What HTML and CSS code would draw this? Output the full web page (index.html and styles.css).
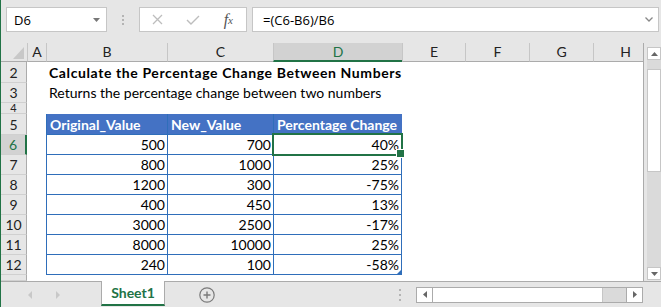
FILE: index.html
```html
<!DOCTYPE html>
<html lang="en">
<head>
    <meta charset="UTF-8">
    <title>Percentage Change</title>

    <link rel="stylesheet" href="styles.css">

</head>
<body>
    <!-- name box + formula -->
    <div class="formula_bar">
        <div class="name_box">
            <span>D6</span>
            <svg width="7" height="4" viewBox="0 0 7 4"><path d="M0 0h7L3.5 4z" fill="#777"/></svg>
        </div>
        <div class="grip"><i></i><i></i><i></i></div>
        <div class="fx_box">
            <span><svg width="11" height="11" viewBox="0 0 11 11"><path d="M1 1l9 9M10 1l-9 9" stroke="#bdbdbd" stroke-width="1.3" fill="none"/></svg></span>
            <span><svg width="14" height="10" viewBox="0 0 14 10"><path d="M1 5l4 4L13 1" stroke="#bdbdbd" stroke-width="1.4" fill="none"/></svg></span>
            <span class="fx">f<sub>x</sub></span>
        </div>
        <div class="formula">
            <span>=(C6-B6)/B6</span>
            <svg width="8" height="5" viewBox="0 0 8 5"><path d="M0.5 0.5l3.5 3.5 3.5-3.5" stroke="#888" stroke-width="1.3" fill="none"/></svg>
        </div>
    </div>

    <div class="main">
        <div class="sheet">
            <div class="corner"><svg width="11" height="12" viewBox="0 0 11 12"><path d="M11 0v12H0z" fill="#c8c8c8"/></svg></div>
            <div class="ch">A</div>
            <div class="ch">B</div>
            <div class="ch">C</div>
            <div class="ch on">D</div>
            <div class="ch">E</div>
            <div class="ch">F</div>
            <div class="ch">G</div>
            <div class="ch">H</div>

            <div class="rh">2</div>
            <div class="cell col_b title">Calculate the Percentage Change Between Numbers</div>

            <div class="rh">3</div>
            <div class="cell col_b sub">Returns the percentage change between two numbers</div>

            <div class="rh short">4</div>

            <div class="rh">5</div>
            <div class="th col_b">Original_Value</div>
            <div class="th">New_Value</div>
            <div class="th">Percentage Change</div>

            <div class="rh on">6</div>
            <div class="td col_b">500</div>
            <div class="td">700</div>
            <div class="td last sel">40%</div>

            <div class="rh">7</div>
            <div class="td col_b">800</div>
            <div class="td">1000</div>
            <div class="td last">25%</div>

            <div class="rh">8</div>
            <div class="td col_b">1200</div>
            <div class="td">300</div>
            <div class="td last">-75%</div>

            <div class="rh">9</div>
            <div class="td col_b">400</div>
            <div class="td">450</div>
            <div class="td last">13%</div>

            <div class="rh">10</div>
            <div class="td col_b">3000</div>
            <div class="td">2500</div>
            <div class="td last">-17%</div>

            <div class="rh">11</div>
            <div class="td col_b">8000</div>
            <div class="td">10000</div>
            <div class="td last">25%</div>

            <div class="rh">12</div>
            <div class="td col_b">240</div>
            <div class="td">100</div>
            <div class="td last end">-58%</div>

            <div class="rh"></div>
        </div>

        <div class="vscroll">
            <div class="sb_btn"><svg width="7" height="4" viewBox="0 0 7 4"><path d="M0 4h7L3.5 0z" fill="#666"/></svg></div>
            <div class="vs_track"><div class="vs_thumb"></div></div>
            <div class="sb_btn"><svg width="7" height="4" viewBox="0 0 7 4"><path d="M0 0h7L3.5 4z" fill="#666"/></svg></div>
        </div>
    </div>

    <!-- sheet tabs -->
    <div class="tab_bar">
        <div class="tab_nav">
            <svg width="4" height="8" viewBox="0 0 4 8"><path d="M4 0v8L0 4z" fill="#c8c8c8"/></svg>
            <svg width="4" height="8" viewBox="0 0 4 8"><path d="M0 0v8l4-4z" fill="#c8c8c8"/></svg>
        </div>
        <div class="tab">Sheet1</div>
        <svg class="add" width="16" height="16" viewBox="0 0 16 16"><circle cx="8" cy="8" r="7.2" stroke="#7a7a7a" stroke-width="1.2" fill="none"/><path d="M8 4.5v7M4.5 8h7" stroke="#7a7a7a" stroke-width="1.4"/></svg>
        <div class="grip tab_grip"><i></i><i></i><i></i></div>
        <div class="hscroll">
            <div class="sb_btn"><svg width="4" height="7" viewBox="0 0 4 7"><path d="M4 0v7L0 3.5z" fill="#666"/></svg></div>
            <div class="hs_thumb"></div>
            <div class="hs_track"></div>
            <div class="sb_btn"><svg width="4" height="7" viewBox="0 0 4 7"><path d="M0 0v7l4-3.5z" fill="#666"/></svg></div>
        </div>
    </div>
</body>
</html>
```

FILE: styles.css
```css
* {
    box-sizing: border-box;
}
body {
    margin: 0;
    width: 661px;
    height: 307px;
    overflow: hidden;
    background-color: #e6e6e6;
    border-left: 1px solid #217346;
    font-family: Lato, "Liberation Sans", sans-serif;
    font-size: 14px;
    color: #000;
}

/* formula bar */
.formula_bar {
    height: 43px;
    display: flex;
    padding: 7px 2px 0 5px;
}
.name_box {
    width: 101px;
    height: 25px;
    background-color: #fff;
    border: 1px solid #c6c6c6;
    display: flex;
    align-items: center;
    justify-content: space-between;
    padding: 0 6px 0 7px;
    font-family: "Open Sans", sans-serif;
    font-size: 13px;
}
.grip {
    width: 32px;
    display: flex;
    flex-direction: column;
    align-items: center;
    gap: 2px;
    padding-top: 8px;
}
.grip i {
    width: 2px;
    height: 2px;
    background-color: #b4b4b4;
}
.fx_box {
    width: 108px;
    height: 25px;
    background-color: #fff;
    border: 1px solid #c6c6c6;
    display: flex;
}
.fx_box span {
    flex: 1;
    display: flex;
    align-items: center;
    justify-content: center;
}
.fx_box .fx {
    font-family: "Liberation Serif", serif;
    font-style: italic;
    font-size: 16px;
    color: #555;
}
.fx sub {
    font-size: 11px;
    vertical-align: -1px;
}
.formula {
    flex: 1;
    margin-left: 5px;
    height: 25px;
    background-color: #fff;
    border: 1px solid #c6c6c6;
    display: flex;
    align-items: center;
    justify-content: space-between;
    padding: 0 5px 0 10px;
    font-family: "Open Sans", sans-serif;
    font-size: 13px;
}

/* grid */
.main {
    display: flex;
    height: 238px;
}
.sheet {
    width: 643px;
    overflow: hidden;
    display: grid;
    grid-template-columns: 26px 19px 121px 106px 129px 63px 64px 64px 64px;
    grid-template-rows: 19px 21px 20px 11px 21px repeat(7, 20px) 6px;
    background-color: #fff;
    border-right: 1px solid #ababab;
}
.corner {
    background-color: #e6e6e6;
    border-bottom: 1px solid #ababab;
    display: flex;
    align-items: flex-end;
    justify-content: flex-end;
    padding: 0 3px 2px 0;
}
.ch {
    background-color: #e6e6e6;
    border-left: 1px solid #c6c6c6;
    border-bottom: 1px solid #ababab;
    text-align: center;
    line-height: 18px;
    color: #222;
}
.ch.on {
    background-color: #d2d2d2;
    color: #217346;
    border-bottom: 2px solid #217346;
}
.rh {
    grid-column: 1;
    background-color: #e6e6e6;
    border-right: 1px solid #ababab;
    border-bottom: 1px solid #d0d0d0;
    display: flex;
    align-items: center;
    justify-content: center;
    overflow: hidden;
    color: #222;
}
.rh.on {
    background-color: #d2d2d2;
    color: #217346;
    border-right: 2px solid #217346;
}
.rh.short {
    font-size: 11px;
    line-height: 10px;
    overflow: visible;
}
.col_b {
    grid-column: 3;
}
.cell {
    white-space: nowrap;
    display: flex;
    align-items: flex-end;
    line-height: 18px;
    padding: 0 0 1px 3px;
}
.title {
    font-weight: bold;
    letter-spacing: 0.6px;
}
.th {
    background-color: #4472c4;
    border-left: 1px solid #2f6eba;
    border-bottom: 1px solid #2f6eba;
    color: #fff;
    font-weight: bold;
    white-space: nowrap;
    display: flex;
    align-items: flex-end;
    line-height: 18px;
    padding-left: 3px;
}
.td {
    border-left: 1px solid #2f6eba;
    border-bottom: 1px solid #2f6eba;
    display: flex;
    align-items: flex-end;
    justify-content: flex-end;
    line-height: 18px;
    padding-right: 2px;
}
.td.last {
    border-right: 1px solid #2f6eba;
}
.sel {
    position: relative;
}
.sel::before {
    content: "";
    position: absolute;
    top: -2px;
    left: -2px;
    right: -2px;
    bottom: -2px;
    border: 2px solid #217346;
}
.sel::after {
    content: "";
    position: absolute;
    right: -4px;
    bottom: -4px;
    width: 7px;
    height: 7px;
    background-color: #217346;
    border: 1px solid #fff;
}
.end {
    position: relative;
}
.end::after {
    content: "";
    position: absolute;
    right: 0;
    bottom: 0;
    border-left: 4px solid transparent;
    border-bottom: 4px solid #2f6eba;
}

/* scroll bars */
.vscroll {
    width: 17px;
    display: flex;
    flex-direction: column;
    padding: 4px 0 1px 3px;
}
.sb_btn {
    height: 13px;
    background-color: #fff;
    border: 1px solid #c6c6c6;
    display: flex;
    align-items: center;
    justify-content: center;
}
.vs_track {
    flex: 1;
    background-color: #dadada;
    padding-top: 9px;
}
.vs_thumb {
    height: 103px;
    background-color: #fff;
    border: 1px solid #c6c6c6;
}

/* tabs */
.tab_bar {
    height: 26px;
    border-top: 1px solid #ababab;
    display: flex;
    align-items: center;
}
.tab_nav {
    width: 100px;
    display: flex;
    align-items: center;
    gap: 24px;
    padding-left: 27px;
}
.tab {
    align-self: flex-start;
    margin-top: -1px;
    width: 64px;
    height: 25px;
    background-color: #fff;
    border-left: 1px solid #ababab;
    border-right: 1px solid #ababab;
    border-bottom: 2px solid #217346;
    color: #217346;
    font-weight: bold;
    text-align: center;
    line-height: 23px;
}
.add {
    margin-left: 34px;
}
.tab_grip {
    width: 2px;
    margin-left: 184px;
    gap: 3px;
    padding-top: 0;
}
.hscroll {
    margin-left: 15px;
    width: 227px;
    height: 16px;
    border: 1px solid #ababab;
    background-color: #dadada;
    display: flex;
}
.hscroll .sb_btn {
    width: 15px;
    height: 14px;
    border: none;
}
.hs_thumb {
    width: 171px;
    background-color: #fff;
    border-left: 1px solid #ababab;
    border-right: 1px solid #c6c6c6;
}
.hs_track {
    flex: 1;
    border-right: 1px solid #ababab;
}
```
